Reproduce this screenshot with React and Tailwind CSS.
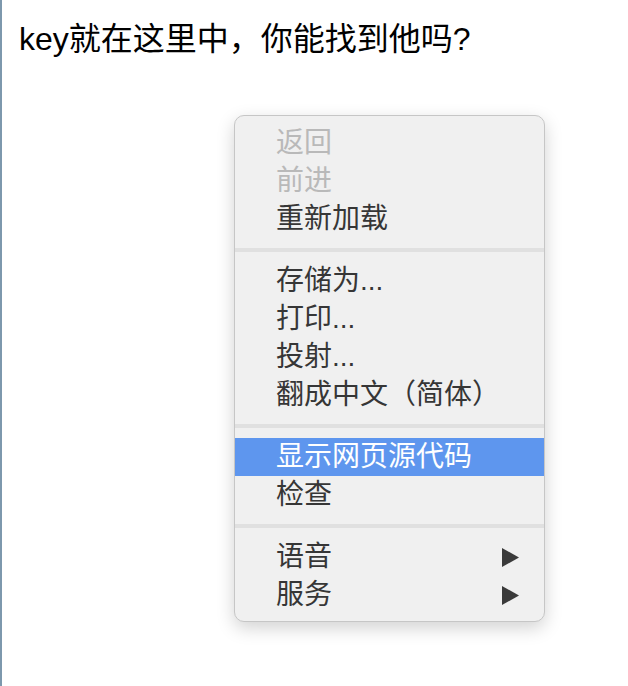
import React from 'react';

const groups = [
  [
    { label: '返回', disabled: true },
    { label: '前进', disabled: true },
    { label: '重新加载' },
  ],
  [
    { label: '存储为...' },
    { label: '打印...' },
    { label: '投射...' },
    { label: '翻成中文（简体）' },
  ],
  [
    { label: '显示网页源代码', active: true },
    { label: '检查' },
  ],
  [
    { label: '语音', submenu: true },
    { label: '服务', submenu: true },
  ],
];

function Arrow() {
  return (
    <svg width="17" height="19" viewBox="0 0 17 19" className="mr-[25px]">
      <polygon points="0,0 17,9.5 0,19" fill="#3a3a3a" />
    </svg>
  );
}

function MenuItem({ item }) {
  return (
    <div
      className={`h-[38px] flex items-center justify-between pl-[41px] ${
        item.active ? 'bg-[#5e96ee] text-white' : item.disabled ? 'text-[#b9b9b9]' : 'text-[#363636]'
      }`}
    >
      <span>{item.label}</span>
      {item.submenu && <Arrow />}
    </div>
  );
}

function ContextMenu() {
  return (
    <div
      className="absolute left-[232px] top-[115px] w-[311px] rounded-[10px] border border-[#c6c6c6] bg-[#f0f0f0] pt-[8px] pb-[7px] shadow-[0_6px_18px_rgba(0,0,0,0.18)] text-[28px] leading-none"
      style={{ fontFamily: '"Liberation Sans", "Noto Sans CJK SC", sans-serif' }}
    >
      {groups.map((group, gi) => (
        <div key={gi}>
          {gi > 0 && (
            <div className="h-[24px] flex items-center">
              <div className="w-full h-[4px] bg-[#e0e0e0]" />
            </div>
          )}
          {group.map((item) => (
            <MenuItem key={item.label} item={item} />
          ))}
        </div>
      ))}
    </div>
  );
}

export default function App() {
  return (
    <div className="relative w-[628px] h-[686px] bg-white border-l-2 border-[#7d98ad] overflow-hidden">
      <h1
        className="pl-[17px] pt-[21px] text-[32px] leading-[37px] font-normal text-black"
        style={{ fontFamily: '"Liberation Sans", "Noto Sans CJK SC", sans-serif' }}
      >
        key就在这里中，你能找到他吗?
      </h1>
      <ContextMenu />
    </div>
  );
}
